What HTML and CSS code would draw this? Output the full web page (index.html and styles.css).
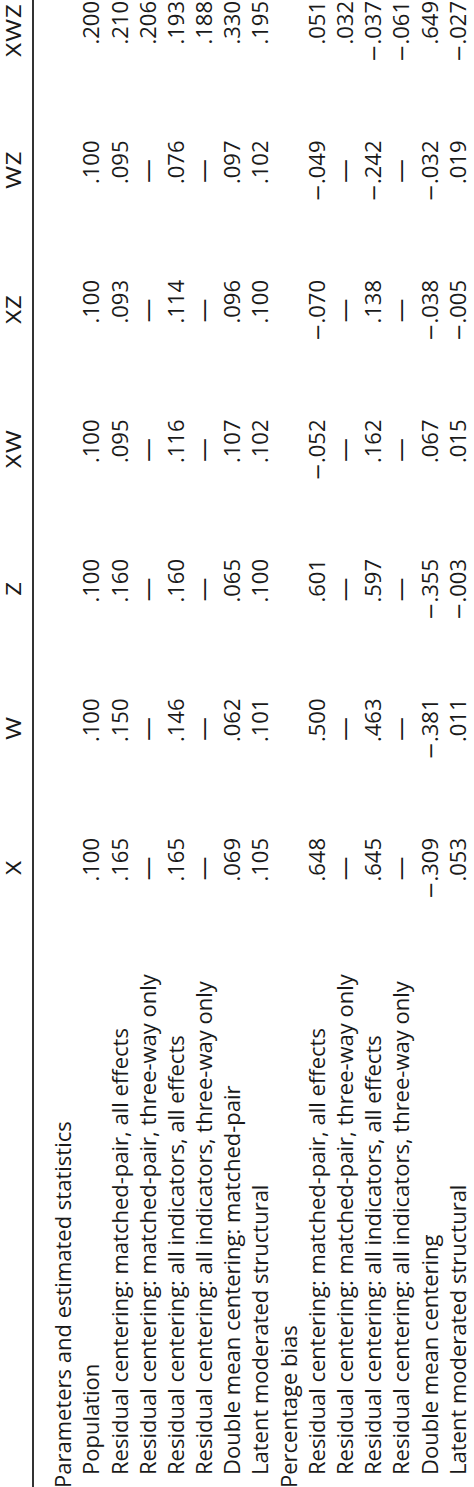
FILE: index.html
```html
<!DOCTYPE html>
<html lang="en">
<head>
<meta charset="utf-8">
<title>Table</title>
<link rel="stylesheet" href="styles.css">
</head>
<body>
<div class="sheet">
  <div class="table">
    <div class="row head">
      <div class="label"></div>
      <div class="col">X</div>
      <div class="col">W</div>
      <div class="col">Z</div>
      <div class="col">XW</div>
      <div class="col">XZ</div>
      <div class="col">WZ</div>
      <div class="col">XWZ</div>
    </div>
    <div class="body">
      <div class="row section"><div class="label">Parameters and estimated statistics</div></div>
      <div class="row"><div class="label sub">Population</div>
        <div class="num">.100</div><div class="num">.100</div><div class="num">.100</div><div class="num">.100</div><div class="num">.100</div><div class="num">.100</div><div class="num">.200</div></div>
      <div class="row"><div class="label sub">Residual centering: matched-pair, all effects</div>
        <div class="num">.165</div><div class="num">.150</div><div class="num">.160</div><div class="num">.095</div><div class="num">.093</div><div class="num">.095</div><div class="num">.210</div></div>
      <div class="row"><div class="label sub">Residual centering: matched-pair, three-way only</div>
        <div class="num"><span class="dash">—</span></div><div class="num"><span class="dash">—</span></div><div class="num"><span class="dash">—</span></div><div class="num"><span class="dash">—</span></div><div class="num"><span class="dash">—</span></div><div class="num"><span class="dash">—</span></div><div class="num">.206</div></div>
      <div class="row"><div class="label sub">Residual centering: all indicators, all effects</div>
        <div class="num">.165</div><div class="num">.146</div><div class="num">.160</div><div class="num">.116</div><div class="num">.114</div><div class="num">.076</div><div class="num">.193</div></div>
      <div class="row"><div class="label sub">Residual centering: all indicators, three-way only</div>
        <div class="num"><span class="dash">—</span></div><div class="num"><span class="dash">—</span></div><div class="num"><span class="dash">—</span></div><div class="num"><span class="dash">—</span></div><div class="num"><span class="dash">—</span></div><div class="num"><span class="dash">—</span></div><div class="num">.188</div></div>
      <div class="row"><div class="label sub">Double mean centering: matched-pair</div>
        <div class="num">.069</div><div class="num">.062</div><div class="num">.065</div><div class="num">.107</div><div class="num">.096</div><div class="num">.097</div><div class="num">.330</div></div>
      <div class="row"><div class="label sub">Latent moderated structural</div>
        <div class="num">.105</div><div class="num">.101</div><div class="num">.100</div><div class="num">.102</div><div class="num">.100</div><div class="num">.102</div><div class="num">.195</div></div>
      <div class="row section"><div class="label">Percentage bias</div></div>
      <div class="row"><div class="label sub">Residual centering: matched-pair, all effects</div>
        <div class="num">.648</div><div class="num">.500</div><div class="num">.601</div><div class="num"><span class="minus">−</span>.052</div><div class="num"><span class="minus">−</span>.070</div><div class="num"><span class="minus">−</span>.049</div><div class="num">.051</div></div>
      <div class="row"><div class="label sub">Residual centering: matched-pair, three-way only</div>
        <div class="num"><span class="dash">—</span></div><div class="num"><span class="dash">—</span></div><div class="num"><span class="dash">—</span></div><div class="num"><span class="dash">—</span></div><div class="num"><span class="dash">—</span></div><div class="num"><span class="dash">—</span></div><div class="num">.032</div></div>
      <div class="row"><div class="label sub">Residual centering: all indicators, all effects</div>
        <div class="num">.645</div><div class="num">.463</div><div class="num">.597</div><div class="num">.162</div><div class="num">.138</div><div class="num"><span class="minus">−</span>.242</div><div class="num"><span class="minus">−</span>.037</div></div>
      <div class="row"><div class="label sub">Residual centering: all indicators, three-way only</div>
        <div class="num"><span class="dash">—</span></div><div class="num"><span class="dash">—</span></div><div class="num"><span class="dash">—</span></div><div class="num"><span class="dash">—</span></div><div class="num"><span class="dash">—</span></div><div class="num"><span class="dash">—</span></div><div class="num"><span class="minus">−</span>.061</div></div>
      <div class="row"><div class="label sub">Double mean centering</div>
        <div class="num"><span class="minus">−</span>.309</div><div class="num"><span class="minus">−</span>.381</div><div class="num"><span class="minus">−</span>.355</div><div class="num">.067</div><div class="num"><span class="minus">−</span>.038</div><div class="num"><span class="minus">−</span>.032</div><div class="num">.649</div></div>
      <div class="row"><div class="label sub">Latent moderated structural</div>
        <div class="num">.053</div><div class="num">.011</div><div class="num"><span class="minus">−</span>.003</div><div class="num">.015</div><div class="num"><span class="minus">−</span>.005</div><div class="num">.019</div><div class="num"><span class="minus">−</span>.027</div></div>
    </div>
  </div>
</div>
</body>
</html>
```
FILE: styles.css
```css
html, body {
  margin: 0;
  padding: 0;
  background: #ffffff;
}

.sheet {
  width: 474px;
  height: 1487px;
  overflow: hidden;
  position: relative;
}

.table {
  width: 1487px;
  height: 474px;
  transform-origin: 0 0;
  transform: translateY(1487px) rotate(-90deg);
  font-family: "Open Sans", Lato, "Noto Sans", sans-serif;
  font-size: 22px;
  color: #1a1a1a;
  white-space: nowrap;
}

.row {
  display: grid;
  grid-template-columns: 550px repeat(7, 139.5px);
  height: 28.2px;
  line-height: 28.2px;
}

.head {
  font-family: Lato, "Open Sans", sans-serif;
  font-size: 22px;
  height: 26.4px;
  line-height: 26.4px;
  padding-bottom: 5.6px;
  border-bottom: 2px solid #333333;
}

.head .col {
  text-align: center;
  letter-spacing: 1px;
}

.body {
  padding-top: 14.2px;
}

.section .label {
  grid-column: 1 / -1;
  margin-left: -1px;
}

.label.sub {
  padding-left: 12px;
}

.num {
  padding-left: 55.5px;
  text-align: left;
}

.minus {
  display: inline-block;
  width: 20px;
  margin-left: -20px;
  text-align: right;
  font-family: "DejaVu Sans", sans-serif;
  font-size: 21px;
}

.dash {
  font-family: "DejaVu Sans", sans-serif;
  font-size: 24px;
  margin-left: 1px;
}
```
